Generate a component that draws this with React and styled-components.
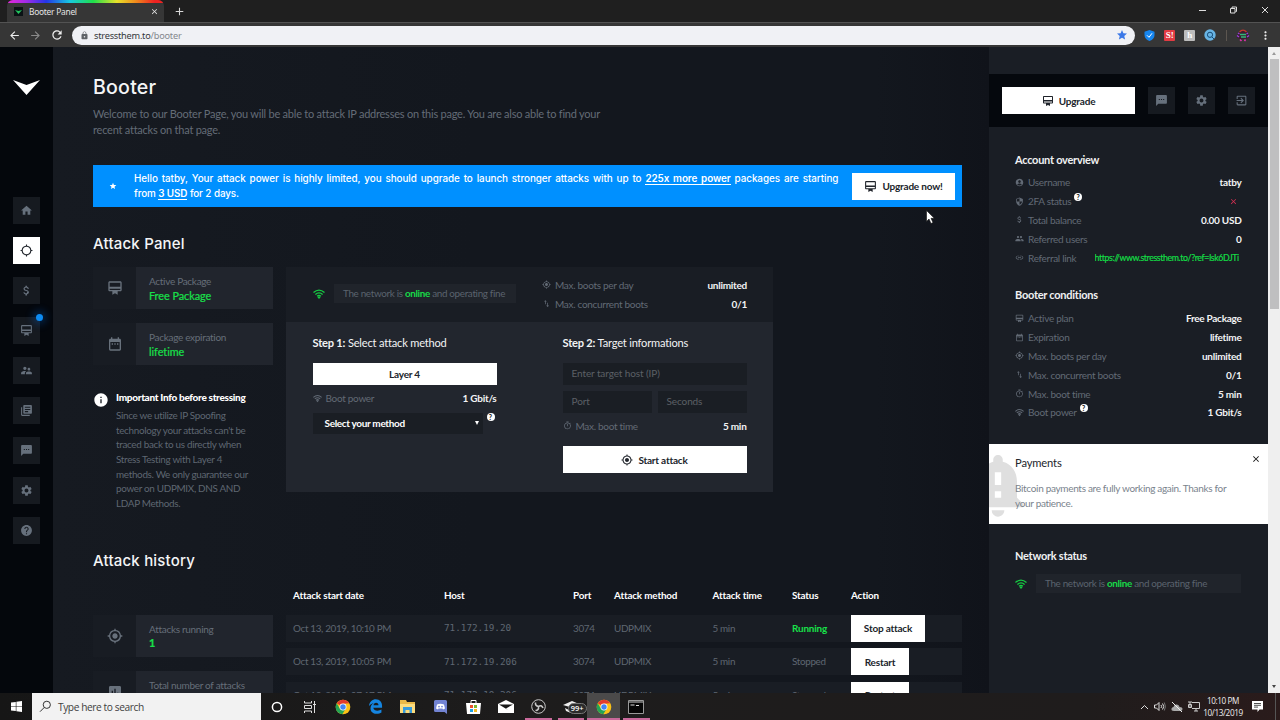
import React from 'react';
import styled, { createGlobalStyle, css } from 'styled-components';
import {
  MdHome, MdLocationSearching, MdMyLocation, MdAttachMoney, MdCardMembership, MdSupervisorAccount,
  MdLibraryBooks, MdSms, MdSettings, MdHelp, MdDateRange, MdAccountCircle, MdSecurity, MdPeople,
  MdLink, MdOutlineTimer, MdInfo, MdExitToApp, MdAssessment, MdNotificationImportant, MdStar,
  MdClose, MdSwapVert, MdLock, MdArrowBack, MdArrowForward, MdRefresh, MdMoreVert, MdAdd,
} from 'react-icons/md';

const Global = createGlobalStyle`
  * { box-sizing: border-box; }
  html, body { margin: 0; height: 720px; overflow: hidden; background: #14181f; }
  body { font-family: Lato, 'Liberation Sans', sans-serif; font-size: 10px; color: #fff; }
  svg { display: block; flex: none; }
`;

const Screen = styled.div`
  position: relative;
  width: 1280px;
  height: 720px;
  display: flex;
  flex-direction: column;
  overflow: hidden;
`;

/* Browser chrome */
const TabStrip = styled.div`
  height: 22px;
  flex: none;
  background: #1f1f1f;
  display: flex;
  align-items: stretch;
  padding-left: 7px;
`;
const Tab = styled.div`
  position: relative;
  width: 157px;
  background: #363636;
  border-radius: 6px 6px 0 0;
  overflow: hidden;
  display: flex;
  align-items: center;
  padding: 1px 5px 0 7px;
  color: #e4e4e4;
  &::before {
    content: '';
    position: absolute;
    left: 0; right: 0; top: 0;
    height: 3px;
    background: linear-gradient(90deg, #e628d8, #a32be8 12%, #2336e8 25%, #18c9e0 40%, #1fe04a 55%, #e8e22a 70%, #f08a1c 82%, #ee2222 94%);
  }
`;
const Favicon = styled.div`
  width: 9px; height: 9px;
  background: #0b1215;
  display: grid;
  place-items: center;
  margin-right: 6px;
`;
const TabTitle = styled.span` flex: 1; white-space: nowrap; font: 8.4px 'Noto Sans', sans-serif; letter-spacing: -0.25px; `;
const NewTab = styled.div` margin-left: 9px; display: flex; align-items: center; color: #d8d8d8; `;
const WindowButtons = styled.div`
  margin-left: auto;
  display: flex;
  align-items: center;
  gap: 24px;
  padding: 0 11px 3px 0;
`;
const Toolbar = styled.div`
  height: 25px;
  flex: none;
  background: #363636;
  border-top: 1px solid #535353;
  display: flex;
  align-items: center;
  padding: 0 9px 0 8px;
  color: #eee;
`;
const NavIcons = styled.div` display: flex; align-items: center; gap: 8px; width: 64px; `;
const Address = styled.div`
  flex: none;
  width: 1063px;
  height: 19px;
  border-radius: 10px;
  background: #f0f1f5;
  display: flex;
  align-items: center;
  padding: 0 7px 0 8px;
  font: 9.2px 'Noto Sans', sans-serif;
  letter-spacing: -0.22px;
  color: #33373b;
  & > svg:first-child { color: #5f6368; margin-right: 5px; }
  & > svg:last-child { margin-left: auto; color: #3b78e7; }
`;
const Path = styled.span` color: #85888d; `;
const Extensions = styled.div`
  flex: 1;
  display: flex;
  align-items: center;
  justify-content: space-between;
  padding-left: 9px;
  margin-right: -1px;
`;
const Ext = styled.div`
  width: 11px; height: 11px;
  border-radius: 1px;
  background: ${p => p.$c};
  color: #fff;
  font: bold 9px/11px 'Liberation Serif', serif;
  text-align: center;
`;
const Bar = styled.i` width: 1px; height: 11px; background: #5c5650; `;

/* Page */
const Page = styled.div` height: 646px; flex: none; display: flex; overflow: hidden; `;
const Side = styled.nav`
  width: 53px;
  flex: none;
  background: #04070c;
  display: flex;
  flex-direction: column;
  align-items: center;
  padding-top: 33px;
`;
const NavList = styled.div` margin-top: 102px; display: flex; flex-direction: column; gap: 13px; `;
const Square = styled.div`
  position: relative;
  width: 27px; height: 27px;
  display: grid;
  place-items: center;
  background: ${p => (p.$active ? '#fff' : '#161a20')};
  color: ${p => (p.$active ? '#20242b' : '#66707c')};
`;
const Dot = styled.i`
  position: absolute;
  right: -3px; top: -3px;
  width: 7px; height: 7px;
  border-radius: 50%;
  background: #0d8bf2;
  box-shadow: 0 0 9px 3px rgba(0, 120, 255, 0.3);
`;
const Main = styled.main`
  width: 936px;
  flex: none;
  padding: 28px 27px 0 40px;
  background: linear-gradient(90deg, #161a21, #13171e 45%, #13171e 88%, #10131a);
  overflow: hidden;
`;
const Heading = styled.h1`
  margin: 0;
  font-family: Inter, sans-serif;
  font-weight: 500;
  font-size: ${p => p.$size}px;
  line-height: 24px;
  height: 24px;
  letter-spacing: 0.2px;
  color: #f4f5f6;
`;
const Intro = styled.p`
  margin: 6.5px 0 0;
  font-size: 11px;
  line-height: 16.6px;
  height: 33px;
  letter-spacing: -0.23px;
  color: #646c77;
  white-space: nowrap;
`;
const Banner = styled.div`
  margin-top: 26.5px;
  height: 42px;
  background: #0090ff;
  display: flex;
  align-items: center;
  padding: 0 7px 0 16px;
`;
const BannerText = styled.div`
  margin-left: 17px;
  font: 500 9.9px/14.7px Inter, sans-serif;
  white-space: nowrap;
  flex: 1;
  div:first-child { word-spacing: 1.3px; letter-spacing: -0.055px; }
  div:last-child { letter-spacing: -0.1px; }
  b { font-weight: 600; border-bottom: 1.5px solid #fff; }
`;
const WhiteButton = styled.div`
  height: ${p => p.$h || 27}px;
  width: ${p => (p.$w ? p.$w + 'px' : 'auto')};
  flex: none;
  background: #fff;
  color: #20242b;
  display: flex;
  align-items: center;
  justify-content: center;
  gap: 5px;
  font-weight: 700;
  font-size: 10px;
  letter-spacing: -0.2px;
  white-space: nowrap;
`;
const Columns = styled.div` display: flex; gap: 13px; margin-top: ${p => p.$top}px; `;
const Left = styled.div` width: 180px; flex: none; display: flex; flex-direction: column; gap: 14px; `;
const StatCard = styled.div` height: 42px; display: flex; color: #666e79; `;
const StatIcon = styled.div` width: 43px; background: #181c23; display: grid; place-items: center; color: #68717c; `;
const StatBody = styled.div`
  flex: 1;
  background: #21252d;
  padding: 8px 0 0 13px;
  font-size: 10px;
  letter-spacing: -0.3px;
  line-height: 13.5px;
  white-space: nowrap;
  strong { display: block; font-size: 10.8px; letter-spacing: -0.02px; font-weight: 400; color: #18e04a; line-height: 13px; -webkit-text-stroke: 0.2px; }
`;
const InfoBox = styled.div`
  display: flex;
  gap: 7px;
  padding-top: 11px;
  & > svg { margin-top: 1.5px; }
`;
const InfoText = styled.div`
  white-space: nowrap;
  h4 { margin: 0 0 4px; font-size: 10px; line-height: 14px; font-weight: 900; letter-spacing: -0.3px; }
  p { margin: 0; font-size: 9.9px; line-height: 14.67px; letter-spacing: -0.31px; color: #5f6772; }
`;
const Panel = styled.section` width: 487px; height: 225px; flex: none; background: #22262e; `;
const PanelTop = styled.div`
  height: 55px;
  background: #191d24;
  display: flex;
  padding: 8.4px 26px 0 27px;
`;
const Network = styled.div`
  display: flex;
  align-items: center;
  height: 20px;
  gap: 9px;
  & > svg { color: #16cc42; }
`;
const NetworkText = styled.div`
  height: 19px;
  line-height: 19px;
  width: ${p => p.$w}px;
  background: #20242b;
  color: #5b636e;
  font-size: 9.9px;
  letter-spacing: -0.33px;
  padding-left: 9px;
  white-space: nowrap;
  b { color: #18d848; font-weight: 700; }
`;
const PanelBody = styled.div` display: flex; justify-content: space-between; padding: 13px 26.5px 0; `;
const Step = styled.div` width: 184px; display: flex; flex-direction: column; `;
const StepTitle = styled.div`
  font-size: 11.1px;
  letter-spacing: -0.2px;
  line-height: 16px;
  margin-bottom: 12px;
  color: #f2f3f4;
  white-space: nowrap;
`;
const Field = styled.div`
  height: 21.5px;
  flex: ${p => p.$w ? 'none' : 1};
  width: ${p => (p.$w ? p.$w + 'px' : 'auto')};
  background: #1a1e24;
  color: ${p => (p.$light ? '#fff' : '#5c6066')};
  display: flex;
  align-items: center;
  justify-content: space-between;
  padding: 0 4px 1px ${p => (p.$light ? 12 : 9)}px;
  font-size: 10px;
  letter-spacing: -0.1px;
  ${p => p.$light && css`font-weight: 700; letter-spacing: -0.33px;`}
`;
const FieldRow = styled.div` display: flex; gap: ${p => p.$gap || 6}px; margin-top: ${p => p.$top || 0}px; `;
const Caret = styled.i` border: 2.3px solid transparent; border-top: 4px solid #fff; border-bottom: 0; `;
const Row = styled.div`
  display: flex;
  align-items: center;
  height: 18.8px;
  color: #626a75;
  font-size: 10px;
  letter-spacing: ${p => p.$ls || -0.3}px;
  white-space: nowrap;
  & > svg { margin-right: 4px; }
  & > em { font-style: normal; font-weight: 700; color: #f2f3f4; margin-left: auto; font-size: 10px; letter-spacing: -0.27px; }
`;
const Specs = styled.div` width: 205px; margin-left: auto; `;
const Tip = styled.i`
  width: 8px; height: 8px;
  border-radius: 50%;
  background: #fff;
  color: #1a1e25;
  font: 900 7px/8px Lato, sans-serif;
  letter-spacing: 0;
  text-align: center;
  margin: ${p => p.$m || '0'};
`;

/* History table */
const Table = styled.div` flex: 1; `;
const TableRow = styled.div`
  height: 26.7px;
  margin-bottom: 6.6px;
  padding: 0 0 1px 7px;
  display: grid;
  grid-template-columns: 151px 129px 41px 98.5px 79.5px 59px 1fr;
  align-items: center;
  justify-items: start;
  background: ${p => (p.$head ? 'none' : '#191d24')};
  color: ${p => (p.$head ? '#fff' : '#5f6772')};
  font-size: 9.9px;
  letter-spacing: ${p => (p.$head ? -0.16 : -0.34)}px;
  font-weight: ${p => (p.$head ? 700 : 400)};
  white-space: nowrap;
  ${WhiteButton} { margin-bottom: -1px; }
`;
const Host = styled.span` font: 9.3px 'DejaVu Sans Mono', monospace; letter-spacing: 0; `;
const Running = styled.b` color: #18e04a; letter-spacing: -0.15px; `;

/* Account column */
const Aside = styled.aside` width: 279px; flex: none; background: #1a1e25; padding-top: 27px; `;
const ActionBar = styled.div` height: 53px; background: #05080d; display: flex; gap: 13px; padding: 13px 0 0 13px; `;
const Section = styled.div`
  padding: 0 26.5px 0 26px;
  margin-top: ${p => p.$top}px;
  h3 { margin: 0 0 ${p => p.$gap || 5}px; height: 18px; line-height: 18px; font-size: 11px; font-weight: 700; letter-spacing: -0.26px; color: #f0f1f2; }
`;
const Link = styled.span`
  margin-left: auto;
  width: 147px;
  overflow: hidden;
  color: #14dd46;
  font-size: 8.8px;
  letter-spacing: -0.4px;
  -webkit-text-stroke: 0.2px;
`;
const Fail = styled.span` margin-left: auto; margin-right: 4px; color: #d22f52; `;
const Notice = styled.div`
  position: relative;
  height: 80px;
  margin-top: 22px;
  background: #fff;
  padding: 10px 0 0 26px;
  color: #7a838d;
  overflow: hidden;
  h3 { position: relative; margin: 0 0 9px; font-size: 11.2px; letter-spacing: -0.15px; font-weight: 400; line-height: 18px; color: #22262c; }
  p { position: relative; margin: 0; font-size: 10px; letter-spacing: -0.32px; line-height: 14.8px; white-space: nowrap; }
`;
const Bell = styled.div` position: absolute; left: -29px; top: 3px; color: #dfdfdf; `;
const Dismiss = styled.div` position: absolute; right: 7px; top: 10px; color: #111; `;
const Scroll = styled.div`
  width: 12px;
  background: #efefef;
  display: flex;
  flex-direction: column;
  align-items: center;
  padding: 5px 0;
`;
const Thumb = styled.div` width: 9px; height: 250px; margin-top: 4px; background: #bfbfc0; `;
const ScrollArrow = styled.i`
  border: 2.5px solid transparent;
  ${p => p.$down ? css`border-top: 3px solid #444; border-bottom: 0; margin-top: auto;` : css`border-bottom: 3px solid #999; border-top: 0;`}
`;

/* Taskbar */
const Taskbar = styled.footer`
  height: 27px;
  flex: none;
  background: linear-gradient(90deg, #161616, #1d1c1c 40%, #1f1c1c 85%, #2a1b1b);
  display: flex;
  font-family: 'Open Sans', 'Noto Sans', sans-serif;
`;
const Start = styled.div` width: 32px; display: grid; place-items: center; `;
const SearchBox = styled.div`
  width: 229px;
  background: #f2f2f2;
  color: #3f3f3f;
  display: flex;
  align-items: center;
  gap: 6px;
  padding-left: 7px;
  font-size: 10.2px;
  letter-spacing: -0.42px;
`;
const TaskApp = styled.div`
  position: relative;
  width: 32.65px;
  display: grid;
  place-items: center;
  background: ${p => (p.$active ? '#4b4a4a' : 'none')};
  &::after {
    content: '';
    display: ${p => (p.$open ? 'block' : 'none')};
    position: absolute;
    left: ${p => (p.$active ? 0 : 3)}px; right: ${p => (p.$active ? 0 : 3)}px; bottom: 0;
    height: 2px;
    background: #c9699b;
  }
`;
const Badge = styled.span`
  position: absolute;
  left: 13px; top: 10px;
  padding: 0 2px;
  border: 1px solid #777;
  border-radius: 6px;
  background: #2b2b2b;
  color: #fff;
  font-size: 7.5px;
  font-weight: 600;
  line-height: 9px;
`;
const Tray = styled.div` margin-left: auto; display: flex; align-items: center; gap: 5px; `;
const Clock = styled.div`
  width: 42px;
  margin-left: -3px;
  text-align: center;
  font-size: 8.2px;
  line-height: 12px;
  letter-spacing: -0.4px;
  color: #eee;
  white-space: nowrap;
`;
const Desk = styled.i` width: 1px; height: 27px; background: #555; margin-left: 5px; margin-right: 4px; `;
const Cursor = styled.svg` position: absolute; left: 926px; top: 210px; `;

const Wifi = ({ size = 12 }) => (
  <svg width={size} height={size} viewBox="0 0 24 24" fill="none" stroke="currentColor" strokeWidth="2.7">
    <path d="M1 9Q12-.5 23 9M4.8 13Q12 6.5 19.2 13M8.3 16.7Q12 13.4 15.7 16.7" />
    <path d="M8.6 18.2L12 22l3.4-3.8Q12 15.5 8.6 18.2Z" fill="currentColor" stroke="none" />
  </svg>
);
const Chrome = () => (
  <svg width="16" height="16" viewBox="0 0 24 24">
    <circle cx="12" cy="12" r="11" fill="#fbc116" />
    <path d="M12 12L2.5 6.5A11 11 0 0 1 21.5 6.5L12 7Z" fill="#e33b2e" />
    <path d="M2.5 6.5A11 11 0 0 0 11 23L16 14.5 12 12 7.5 14.5Z" fill="#23a455" />
    <circle cx="12" cy="12" r="5.2" fill="#fff" /><circle cx="12" cy="12" r="4.1" fill="#4285f4" />
  </svg>
);
const NetworkLine = ({ w }) => (
  <Network><Wifi /><NetworkText $w={w}>The network is <b>online</b> and operating fine</NetworkText></Network>
);
const Stat = ({ icon: Icon, label, value }) => (
  <StatCard><StatIcon><Icon size={16} /></StatIcon><StatBody>{label}{value && <strong>{value}</strong>}</StatBody></StatCard>
);
const Info = ({ icon: Icon, label, value, tip, children }) => (
  <Row><Icon size={9} />{label}{tip && <Tip $m="-9px 0 0 3px">?</Tip>}{children}{value && <em>{value}</em>}</Row>
);

const nav = [MdHome, MdLocationSearching, MdAttachMoney, MdCardMembership, MdSupervisorAccount, MdLibraryBooks, MdSms, MdSettings, MdHelp];
const history = [
  ['Oct 13, 2019, 10:10 PM', '71.172.19.20', true],
  ['Oct 13, 2019, 10:05 PM', '71.172.19.206', false],
  ['Oct 13, 2019, 07:17 PM', '71.172.19.206', false],
];

export default function App() {
  return (
    <Screen>
      <Global />
      <TabStrip>
        <Tab>
          <Favicon><svg width="7" height="6" viewBox="0 0 27 15"><path d="M0 0L13.5 4 27 0 13.5 15Z" fill="#22c55e" /></svg></Favicon>
          <TabTitle>Booter Panel</TabTitle>
          <MdClose size={9} />
        </Tab>
        <NewTab><MdAdd size={13} /></NewTab>
        <WindowButtons>
          <svg width="7" height="8"><path d="M0 4.5H7" stroke="#ddd" /></svg>
          <svg width="7" height="8" fill="none" stroke="#ddd"><path d="M.5 2.5h4.5v4.5H.5zM2 2V1h4.5v4.5H5.5" /></svg>
          <svg width="8" height="8"><path d="M1 1l6 6M7 1L1 7" stroke="#ddd" /></svg>
        </WindowButtons>
      </TabStrip>
      <Toolbar>
        <NavIcons>
          <MdArrowBack size={13} /><MdArrowForward size={13} color="#8b8b8b" /><MdRefresh size={14} />
        </NavIcons>
        <Address><MdLock size={9} />stressthem.to<Path>/booter</Path><MdStar size={12} /></Address>
        <Extensions>
          <svg width="11" height="11" viewBox="0 0 11 11"><path d="M5.500 0L10.500 1.800V5Q10.500 9 5.500 11Q.5 9 .5 5V1.800Z" fill="#1685ee" /><path d="M3 5.300l2 2 3-4" fill="none" stroke="#fff" /></svg>
          <Ext $c="#e23b43">S!</Ext>
          <Ext $c="#bcbcbc">h</Ext>
          <svg width="12" height="12" viewBox="0 0 12 12" fill="none"><circle cx="6" cy="6" r="5.700" fill="#68b4e4" /><circle cx="6" cy="5.800" r="2.600" stroke="#154a75" /><path d="M8 8l2 2" stroke="#154a75" /></svg>
          <Bar />
          <svg width="14" height="13" viewBox="0 0 14 13">
            <path d="M3 3Q7-1.500 11 3L13.500 8 11 10H3L.5 8z" fill="#3a2030" />
            <path d="M3.500 3Q7-.8 10.500 3" fill="none" stroke="#c6392c" strokeWidth="1.300" />
            <path d="M4 5.500h6M5 8h5" stroke="#32b879" strokeWidth="1.400" />
            <path d="M1 6.500l2 1.500M13 6.500L11 8M2 4l1.500 1M12 4l-1.500 1" stroke="#9b3fe0" strokeWidth="1.300" />
            <path d="M4 10.500l1.500 1.500M9.500 10.500L8.500 12" stroke="#e632b0" strokeWidth="1.500" />
          </svg>
          <MdMoreVert size={13} />
        </Extensions>
      </Toolbar>

      <Page>
        <Side>
          <svg width="27" height="15" viewBox="0 0 27 15"><path d="M0 0L13.500 5 27 0 13.500 15Z" fill="#fff" /></svg>
          <NavList>
            {nav.map((Icon, i) => (
              <Square key={i} $active={i === 1}><Icon size={13} />{i === 3 && <Dot />}</Square>
            ))}
          </NavList>
        </Side>

        <Main>
          <Heading $size={19.6}>Booter</Heading>
          <Intro>Welcome to our Booter Page, you will be able to attack IP addresses on this page. You are also able to find your<br />recent attacks on that page.</Intro>
          <Banner>
            <MdStar size={8} />
            <BannerText>
              <div>Hello tatby, Your attack power is highly limited, you should upgrade to launch stronger attacks with up to <b>225x more power</b> packages are starting</div>
              <div>from <b>3 USD</b> for 2 days.</div>
            </BannerText>
            <WhiteButton $w={103}><MdCardMembership size={13} />Upgrade now!</WhiteButton>
          </Banner>

          <Columns $top={25}><Heading $size={15}>Attack Panel</Heading></Columns>
          <Columns $top={11}>
            <Left>
              <Stat icon={MdCardMembership} label="Active Package" value="Free Package" />
              <Stat icon={MdDateRange} label="Package expiration" value="lifetime" />
              <InfoBox>
                <MdInfo size={16} />
                <InfoText>
                  <h4>Important Info before stressing</h4>
                  <p>Since we utilize IP Spoofing<br />technology your attacks can't be<br />traced back to us directly when<br />Stress Testing with Layer 4<br />methods. We only guarantee our<br />power on UDPMIX, DNS AND<br />LDAP Methods.</p>
                </InfoText>
              </InfoBox>
            </Left>
            <Panel>
              <PanelTop>
                <FieldRow $top={8.6}><NetworkLine w={182} /></FieldRow>
                <Specs>
                  <Info icon={MdMyLocation} label="Max. boots per day" value="unlimited" />
                  <Info icon={MdSwapVert} label="Max. concurrent boots" value="0/1" />
                </Specs>
              </PanelTop>
              <PanelBody>
                <Step>
                  <StepTitle><b>Step 1:</b> Select attack method</StepTitle>
                  <WhiteButton $h={22}>Layer 4</WhiteButton>
                  <FieldRow $top={4} />
                  <Info icon={Wifi} label="Boot power" value="1 Gbit/s" />
                  <FieldRow $top={5} $gap={4}><Field $w={170} $light>Select your method<Caret /></Field><Tip>?</Tip></FieldRow>
                </Step>
                <Step>
                  <StepTitle><b>Step 2:</b> Target informations</StepTitle>
                  <FieldRow><Field>Enter target host (IP)</Field></FieldRow>
                  <FieldRow $top={6.5}><Field>Port</Field><Field>Seconds</Field></FieldRow>
                  <FieldRow $top={4} />
                  <Info icon={MdOutlineTimer} label="Max. boot time" value="5 min" />
                  <FieldRow $top={11} />
                  <WhiteButton><MdMyLocation size={12} />Start attack</WhiteButton>
                </Step>
              </PanelBody>
            </Panel>
          </Columns>

          <Columns $top={38}><Heading $size={15}>Attack history</Heading></Columns>
          <Columns $top={9}>
            <Left>
              <FieldRow $top={19} />
              <Stat icon={MdMyLocation} label="Attacks running" value={<b>1</b>} />
              <Stat icon={MdAssessment} label="Total number of attacks" />
            </Left>
            <Table>
              <TableRow $head>
                <span>Attack start date</span><span>Host</span><span>Port</span><span>Attack method</span><span>Attack time</span><span>Status</span><span>Action</span>
              </TableRow>
              {history.map(([date, host, running]) => (
                <TableRow key={date}>
                  <span>{date}</span><Host>{host}</Host><span>3074</span><span>UDPMIX</span><span>5 min</span>
                  {running ? <Running>Running</Running> : <span>Stopped</span>}
                  <WhiteButton $w={running ? 74 : 58}>{running ? 'Stop attack' : 'Restart'}</WhiteButton>
                </TableRow>
              ))}
            </Table>
          </Columns>
        </Main>

        <Aside>
          <ActionBar>
            <WhiteButton $w={133}><MdCardMembership size={12} />Upgrade</WhiteButton>
            <Square><MdSms size={13} /></Square><Square><MdSettings size={13} /></Square><Square><MdExitToApp size={13} /></Square>
          </ActionBar>
          <Section $top={24} $gap={4}>
            <h3>Account overview</h3>
            <Info icon={MdAccountCircle} label="Username" value="tatby" />
            <Info icon={MdSecurity} label="2FA status" tip><Fail><MdClose size={9} /></Fail></Info>
            <Info icon={MdAttachMoney} label="Total balance" value="0.00 USD" />
            <Info icon={MdPeople} label="Referred users" value="0" />
            <Info icon={MdLink} label="Referral link"><Link>https://www.stressthem.to/?ref=Isk6DJTi</Link></Info>
          </Section>
          <Section $top={19}>
            <h3>Booter conditions</h3>
            <Info icon={MdCardMembership} label="Active plan" value="Free Package" />
            <Info icon={MdDateRange} label="Expiration" value="lifetime" />
            <Info icon={MdMyLocation} label="Max. boots per day" value="unlimited" />
            <Info icon={MdSwapVert} label="Max. concurrent boots" value="0/1" />
            <Info icon={MdOutlineTimer} label="Max. boot time" value="5 min" />
            <Info icon={Wifi} label="Boot power" value="1 Gbit/s" tip />
          </Section>
          <Notice>
            <Bell><MdNotificationImportant size={76} /></Bell>
            <Dismiss><MdClose size={10} /></Dismiss>
            <h3>Payments</h3>
            <p>Bitcoin payments are fully working again. Thanks for<br />your patience.</p>
          </Notice>
          <Section $top={23}>
            <h3>Network status</h3>
            <FieldRow $top={9}><NetworkLine w={205} /></FieldRow>
          </Section>
        </Aside>
        <Scroll><ScrollArrow /><Thumb /><ScrollArrow $down /></Scroll>
      </Page>

      <Taskbar>
        <Start><svg width="11" height="11" viewBox="0 0 11 11" fill="#fff"><path d="M0 1.500L4.800.9V5.200H0zM5.400.8L11 0V5.200H5.400zM0 5.800H4.800V10.100L0 9.500zM5.400 5.800H11V11L5.400 10.200z" /></svg></Start>
        <SearchBox>
          <svg width="13" height="13" viewBox="0 0 13 13" fill="none" stroke="#333"><circle cx="7.800" cy="4.800" r="3.600" /><path d="M5.200 7.500L1 11.700" /></svg>
          Type here to search
        </SearchBox>
        <TaskApp><svg width="12" height="12"><circle cx="6" cy="6" r="4.600" fill="none" stroke="#fff" strokeWidth="1.500" /></svg></TaskApp>
        <TaskApp><svg width="12" height="12" fill="none" stroke="#ddd"><path d="M.5 0v2h7V0M.5 4.500h7v3h-7zM.5 12v-2h7v2M10.500 0v12M9 3.500h3" /></svg></TaskApp>
        <TaskApp><Chrome /></TaskApp>
        <TaskApp><svg width="15" height="15" viewBox="0 0 24 24"><path d="M1.500 11.500C2.500 4 7 .5 12.500 .5c6.500 0 10 4.800 10 10.500V14H8.500c.3 3.500 3.500 4.600 6.500 4.600 2.500 0 4.500-.6 6.500-1.800v4.700c-2 1.200-4.600 2-7.800 2C7.500 23.500 4 19.500 4 15c0-4 2-6.800 5.200-8.300C6 7 3.500 8.800 1.500 11.500zM8.800 10h8c0-2.600-1.400-4-3.800-4s-3.900 1.600-4.200 4z" fill="#1585e0" fillRule="evenodd" /></svg></TaskApp>
        <TaskApp><svg width="15" height="13" viewBox="0 0 15 13"><path d="M0 0h6l1 2h8v11H0z" fill="#e9b949" /><path d="M0 4h15v9H0z" fill="#fbdc7e" /><path d="M3 7h9v6h-2.500v-3h-4v3H3z" fill="#369bdc" /></svg></TaskApp>
        <TaskApp><svg width="13" height="14" viewBox="0 0 13 14"><path d="M1.500 0h10Q13 0 13 1.500V14l-2.500-2h-9Q0 12 0 10.500v-9Q0 0 1.500 0z" fill="#7283d2" /><path d="M3 4.500Q6.500 2.800 10 4.500L11 8.500 9 9.500 8.500 8.600H4.500L4 9.500 2 8.500z" fill="#fff" /><circle cx="5" cy="6.600" r=".9" fill="#7283d2" /><circle cx="8" cy="6.600" r=".9" fill="#7283d2" /></svg></TaskApp>
        <TaskApp><svg width="15" height="15" viewBox="0 0 15 15"><path d="M5 4V1.500h5V4" fill="none" stroke="#fff" /><path d="M0 4h15l-1 11H1z" fill="#fff" /><path d="M4 6h3v3H4z" fill="#e8502c" /><path d="M8 6h3v3H8z" fill="#7db72f" /><path d="M4 10h3v3H4z" fill="#1ea0e0" /><path d="M8 10h3v3H8z" fill="#f4b61d" /></svg></TaskApp>
        <TaskApp><svg width="16" height="13" viewBox="0 0 16 13"><path d="M0 4L8 0l8 4v9H0z" fill="#fff" /><path d="M1 4.500h14L8 8.500 10 10z" fill="#181818" /></svg></TaskApp>
        <TaskApp $open><svg width="15" height="15" viewBox="0 0 15 15" fill="none" stroke="#c8c8c8"><circle cx="7.500" cy="7.500" r="6.800" /><path d="M7.500 7.500Q4 7 4.500 3.500M7.500 7.500Q10.500 5.500 12 9M7.500 7.500Q8 11.500 4.500 11.500" strokeWidth="1.600" /></svg></TaskApp>
        <TaskApp $open><svg width="16" height="13" viewBox="0 0 16 13"><path d="M0 5L9 1l7 3-6 4zM2 8l6 3 4-3v3l-4 2-5-2z" fill="#eee" /></svg><Badge>99+</Badge></TaskApp>
        <TaskApp $open $active><Chrome /></TaskApp>
        <TaskApp $open><svg width="16" height="14" viewBox="0 0 16 14"><path d="M.5.5h15v13H.5z" fill="#050505" stroke="#999" /><path d="M1 2h14" stroke="#ccc" /><path d="M2.500 5h4M8 5.500h3" stroke="#ddd" /></svg></TaskApp>
        <Tray>
          <svg width="9" height="10" fill="none" stroke="#ddd"><path d="M1 7l3.500-3.500L8 7" /></svg>
          <svg width="12" height="11" viewBox="0 0 12 11" fill="none" stroke="#ddd"><path d="M.5 4h2L5 1.500v8L2.500 7h-2zM7 4q1.200 1.500 0 3M8.500 2.500q2.500 3 0 6" /><path d="M10.300 1.500q2.300 4 0 8" stroke="#777" /></svg>
          <svg width="12" height="10" viewBox="0 0 12 10"><path d="M3 9Q0 9 .5 6.500 1 5 2.500 5 3 2 6 2.500 8.500 3 8.500 5 11.500 5 11.500 7T9.500 9z" fill="#aaa" /><path d="M1 0l10 10" stroke="#eee" /></svg>
          <svg width="12" height="11" viewBox="0 0 12 11" fill="none" stroke="#ccc"><path d="M4 1.500h7.500v6H4M0 1h4M2 1v6M6 10h4M8 8v2M.5 3.500h3v3h-3z" /></svg>
          <Clock>10:10 PM<br />10/13/2019</Clock>
          <svg width="16" height="13" viewBox="-2 0 16 13"><path d="M1 1h11v8.500H8.500L6.500 12V9.500H1z" fill="#fff" /><path d="M3 3.500h7M3 5.300h7M3 7.100h4" stroke="#222" strokeWidth=".8" /></svg>
          <Desk />
        </Tray>
      </Taskbar>
      <Cursor width="9" height="14" viewBox="0 0 9 14"><path d="M.5.5V11.500L3 9 5 13.500 7 12.600 5 8.300H8.300z" fill="#fff" stroke="#111" strokeWidth=".6" /></Cursor>
    </Screen>
  );
}
